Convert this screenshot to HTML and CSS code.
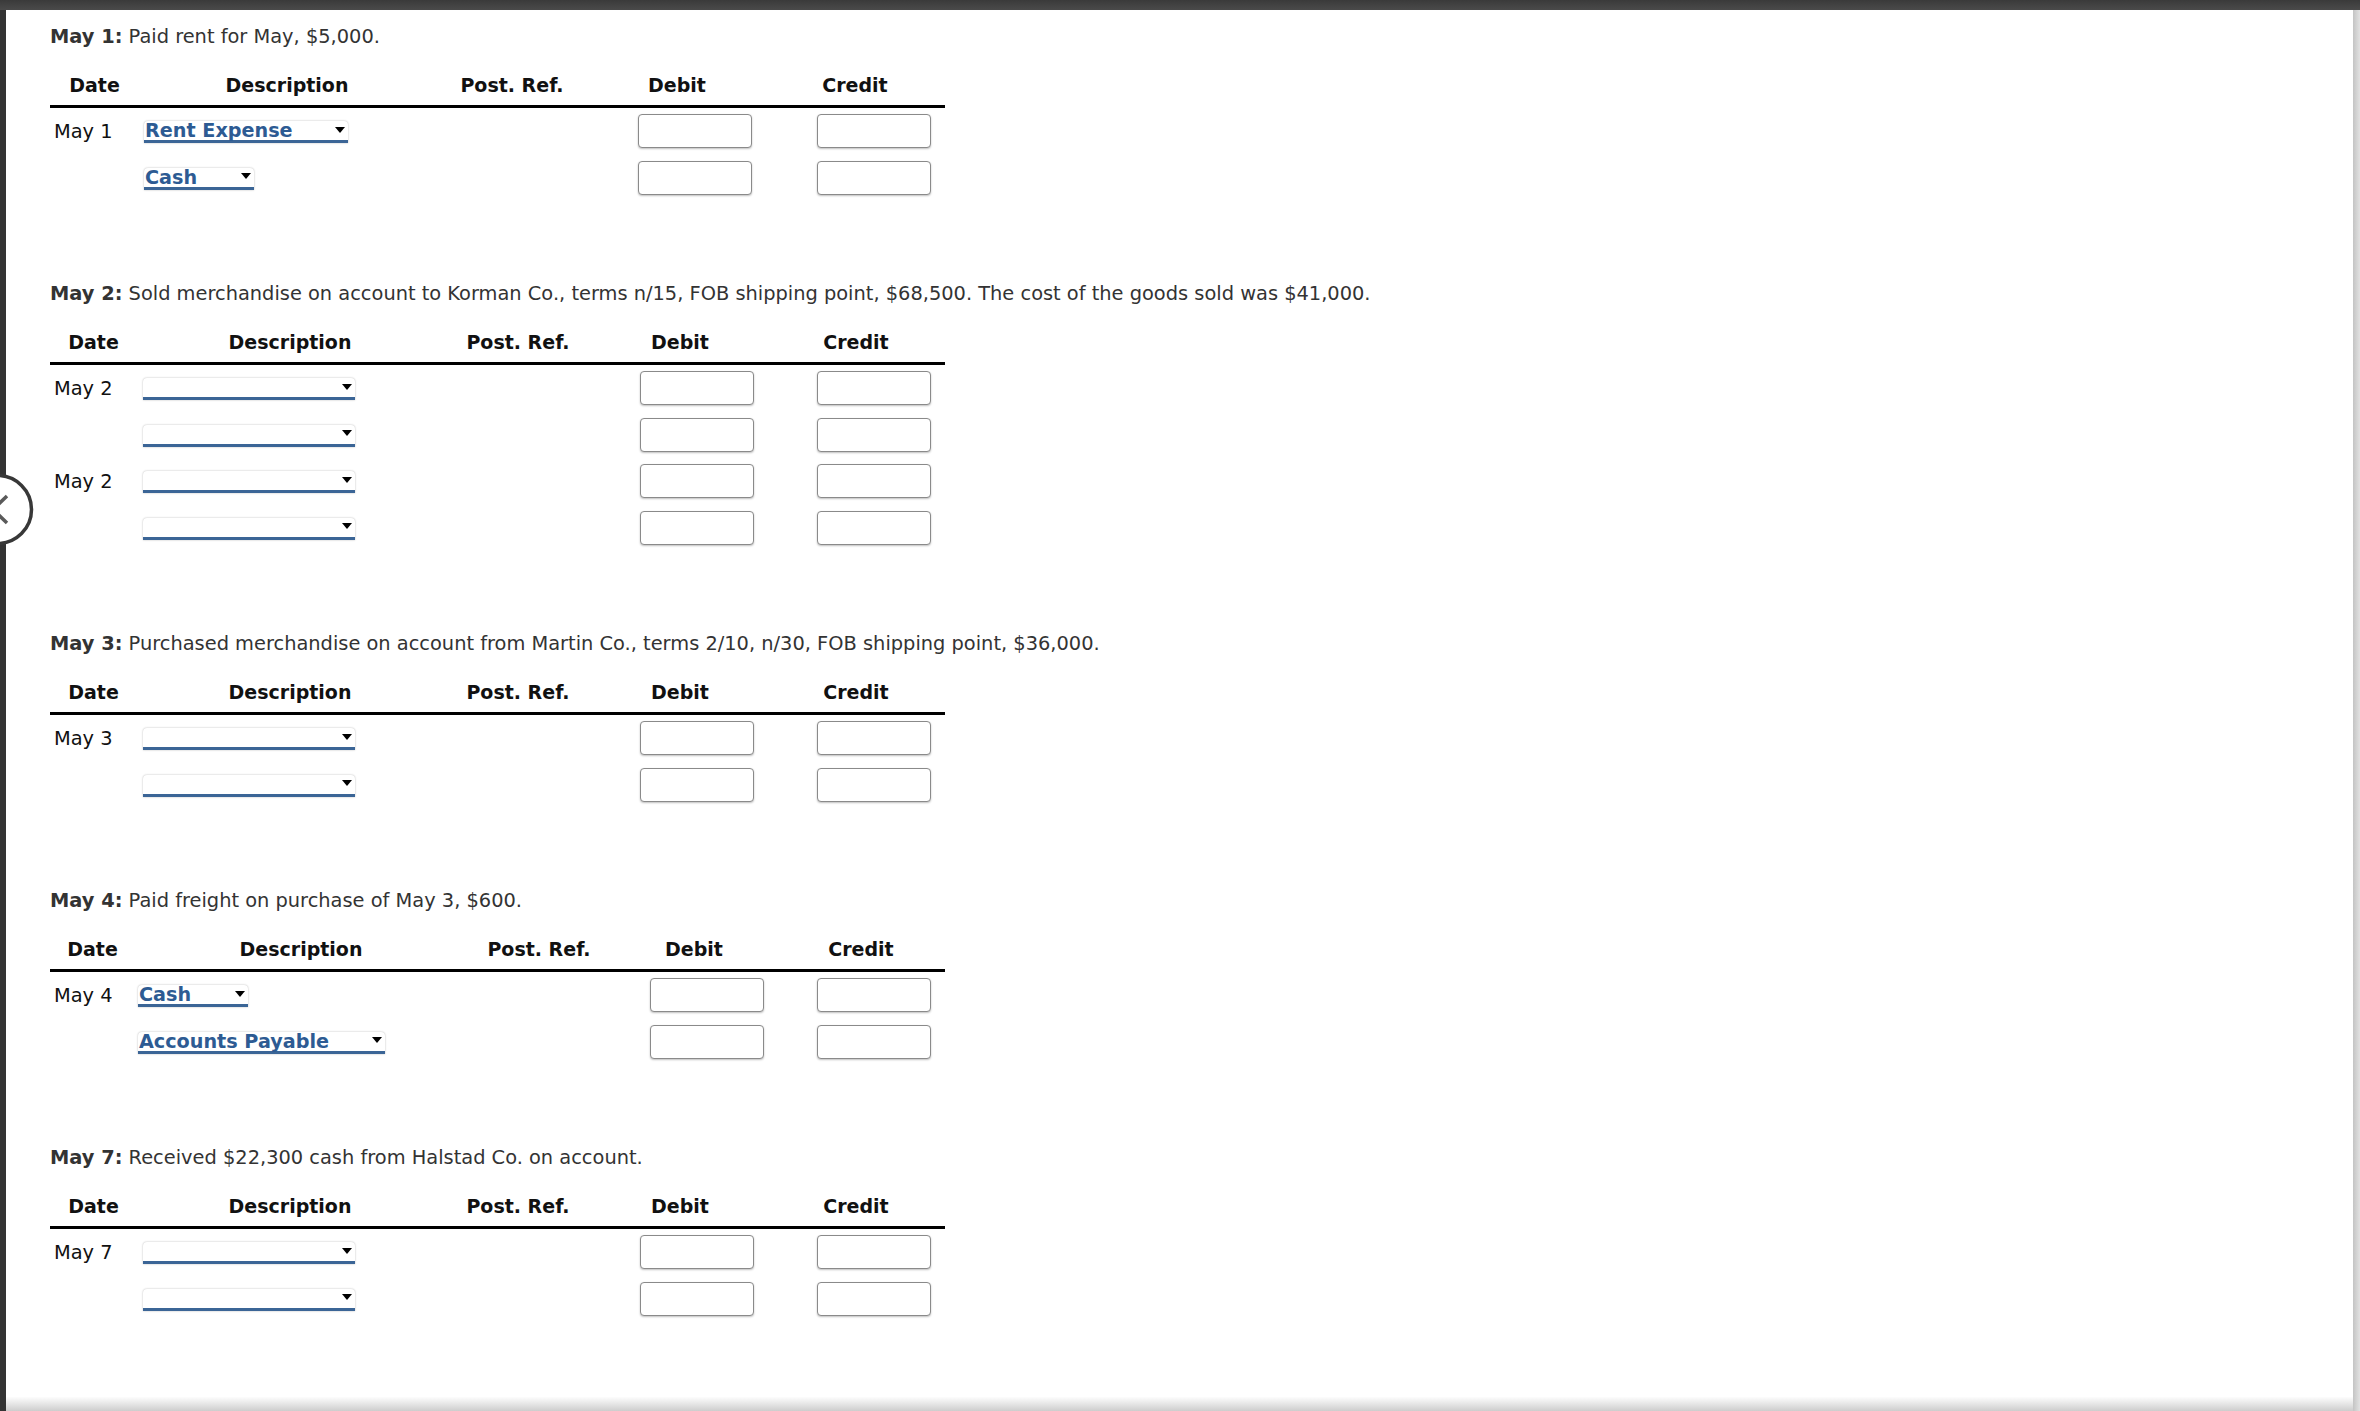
FILE: index.html
```html
<!DOCTYPE html>
<html lang="en">
<head>
<meta charset="utf-8">
<title>Journal entries</title>
<link rel="stylesheet" href="styles.css">
</head>
<body>
<div class="topbar"></div>
<div class="frame">
  <div class="leftbar"></div>
  <div class="column">
    <main class="page">

      <section class="entry">
        <p class="prompt"><b>May 1:</b> Paid rent for May, $5,000.</p>
        <div class="journal t1">
          <div class="th">Date</div><div class="th">Description</div><div class="th">Post. Ref.</div><div class="th">Debit</div><div class="th">Credit</div>
          <div class="date">May 1</div><div class="desc"><div class="select w-rent"><span>Rent Expense</span><i class="arrow"></i></div></div><div class="ref"></div><div class="amt debit"><div class="field"></div></div><div class="amt credit"><div class="field"></div></div>
          <div class="date"></div><div class="desc"><div class="select w-cash"><span>Cash</span><i class="arrow"></i></div></div><div class="ref"></div><div class="amt debit"><div class="field"></div></div><div class="amt credit"><div class="field"></div></div>
        </div>
      </section>

      <section class="entry">
        <p class="prompt"><b>May 2:</b> Sold merchandise on account to Korman Co., terms n/15, FOB shipping point, $68,500. The cost of the goods sold was $41,000.</p>
        <div class="journal t2">
          <div class="th">Date</div><div class="th">Description</div><div class="th">Post. Ref.</div><div class="th">Debit</div><div class="th">Credit</div>
          <div class="date">May 2</div><div class="desc"><div class="select w-empty"><span></span><i class="arrow"></i></div></div><div class="ref"></div><div class="amt debit"><div class="field"></div></div><div class="amt credit"><div class="field"></div></div>
          <div class="date"></div><div class="desc"><div class="select w-empty"><span></span><i class="arrow"></i></div></div><div class="ref"></div><div class="amt debit"><div class="field"></div></div><div class="amt credit"><div class="field"></div></div>
          <div class="date">May 2</div><div class="desc"><div class="select w-empty"><span></span><i class="arrow"></i></div></div><div class="ref"></div><div class="amt debit"><div class="field"></div></div><div class="amt credit"><div class="field"></div></div>
          <div class="date"></div><div class="desc"><div class="select w-empty"><span></span><i class="arrow"></i></div></div><div class="ref"></div><div class="amt debit"><div class="field"></div></div><div class="amt credit"><div class="field"></div></div>
        </div>
      </section>

      <section class="entry">
        <p class="prompt"><b>May 3:</b> Purchased merchandise on account from Martin Co., terms 2/10, n/30, FOB shipping point, $36,000.</p>
        <div class="journal t2">
          <div class="th">Date</div><div class="th">Description</div><div class="th">Post. Ref.</div><div class="th">Debit</div><div class="th">Credit</div>
          <div class="date">May 3</div><div class="desc"><div class="select w-empty"><span></span><i class="arrow"></i></div></div><div class="ref"></div><div class="amt debit"><div class="field"></div></div><div class="amt credit"><div class="field"></div></div>
          <div class="date"></div><div class="desc"><div class="select w-empty"><span></span><i class="arrow"></i></div></div><div class="ref"></div><div class="amt debit"><div class="field"></div></div><div class="amt credit"><div class="field"></div></div>
        </div>
      </section>

      <section class="entry">
        <p class="prompt"><b>May 4:</b> Paid freight on purchase of May 3, $600.</p>
        <div class="journal t4">
          <div class="th">Date</div><div class="th">Description</div><div class="th">Post. Ref.</div><div class="th">Debit</div><div class="th">Credit</div>
          <div class="date">May 4</div><div class="desc"><div class="select w-cash"><span>Cash</span><i class="arrow"></i></div></div><div class="ref"></div><div class="amt debit"><div class="field"></div></div><div class="amt credit"><div class="field"></div></div>
          <div class="date"></div><div class="desc"><div class="select w-ap"><span>Accounts Payable</span><i class="arrow"></i></div></div><div class="ref"></div><div class="amt debit"><div class="field"></div></div><div class="amt credit"><div class="field"></div></div>
        </div>
      </section>

      <section class="entry">
        <p class="prompt"><b>May 7:</b> Received $22,300 cash from Halstad Co. on account.</p>
        <div class="journal t2">
          <div class="th">Date</div><div class="th">Description</div><div class="th">Post. Ref.</div><div class="th">Debit</div><div class="th">Credit</div>
          <div class="date">May 7</div><div class="desc"><div class="select w-empty"><span></span><i class="arrow"></i></div></div><div class="ref"></div><div class="amt debit"><div class="field"></div></div><div class="amt credit"><div class="field"></div></div>
          <div class="date"></div><div class="desc"><div class="select w-empty"><span></span><i class="arrow"></i></div></div><div class="ref"></div><div class="amt debit"><div class="field"></div></div><div class="amt credit"><div class="field"></div></div>
        </div>
      </section>

    </main>
    <div class="bottom-shade"></div>
  </div>
  <div class="scrollstrip"></div>
</div>
<svg class="back-btn" width="44" height="80" viewBox="-6 0 44 80" aria-hidden="true">
  <circle cx="-8.5" cy="40.5" r="34" fill="#fff" stroke="#383838" stroke-width="3.5"/>
  <polyline points="1,27 -13,40.5 1,54" fill="none" stroke="#5a5a5a" stroke-width="3.5"/>
</svg>
</body>
</html>
```
FILE: styles.css
```css
html, body {
  margin: 0;
  padding: 0;
  height: 100%;
  overflow: hidden;
  background: #fff;
}
body {
  font-family: "DejaVu Sans", Verdana, sans-serif;
  font-size: 19px;
  color: #222;
  display: flex;
  flex-direction: column;
  position: relative;
}
.topbar {
  height: 10px;
  flex: none;
  background: linear-gradient(#3a3a3a, #4a4a4a);
}
.frame {
  flex: 1;
  display: flex;
  min-height: 0;
}
.leftbar {
  width: 6px;
  flex: none;
  background: #333;
}
.column {
  flex: 1;
  display: flex;
  flex-direction: column;
  min-width: 0;
}
.page {
  flex: 1;
  padding: 15px 0 0 44px;
  overflow: hidden;
}
.bottom-shade {
  height: 14px;
  flex: none;
  background: linear-gradient(#fdfdfd, #cdcdcd);
}
.scrollstrip {
  width: 7px;
  flex: none;
  background: linear-gradient(90deg, #c4c4c4, #e2e2e2);
}

.entry {
  margin-bottom: 81px;
}
.prompt {
  margin: 0 0 16px 0;
  font-size: 19.4px;
  line-height: 24px;
  color: #333;
  white-space: nowrap;
}
.prompt b {
  font-weight: bold;
}

.journal {
  display: grid;
  width: 895px;
  grid-template-rows: 43px;
  grid-auto-rows: 46.5px;
  color: #111;
}
.t1 { grid-template-columns: 89px 296px 154px 176px 180px; }
.t2 { grid-template-columns: 87px 306px 150px 174px 178px; }
.t4 { grid-template-columns: 85px 332px 144px 166px 168px; }

.th {
  box-sizing: border-box;
  border-bottom: 3px solid #000;
  font-weight: bold;
  text-align: center;
  line-height: 40px;
  color: #111;
}
.date {
  display: flex;
  align-items: center;
  padding-left: 4px;
  white-space: nowrap;
  font-size: 19.4px;
}
.desc {
  display: flex;
  align-items: center;
}
.t1 .desc { padding-left: 5px; }
.t2 .desc { padding-left: 6px; }
.t4 .desc { padding-left: 3px; }

.amt {
  display: flex;
  align-items: center;
  justify-content: flex-end;
}
.debit { padding-right: 13px; }
.credit { padding-right: 14px; }

.field {
  width: 114px;
  height: 34px;
  box-sizing: border-box;
  border: 1px solid #8a8a8a;
  border-radius: 4px;
  background: #fff;
  box-shadow: 0 1px 2px rgba(0, 0, 0, 0.25);
}

.select {
  display: flex;
  align-items: center;
  justify-content: space-between;
  box-sizing: border-box;
  height: 22px;
  margin-top: 2px;
  padding: 0 3px 0 1px;
  background: #fff;
  border-bottom: 3px solid #3b6596;
  border-radius: 4px 4px 0 0;
  box-shadow: 0 0 2px rgba(0, 0, 0, 0.3);
  color: #2d5b93;
  font-weight: bold;
  font-size: 19.2px;
  line-height: 19px;
  white-space: nowrap;
}
.w-rent { width: 204px; }
.w-cash { width: 110px; }
.w-empty { width: 212px; }
.w-ap { width: 247px; }

.arrow {
  width: 0;
  height: 0;
  border-left: 5px solid transparent;
  border-right: 5px solid transparent;
  border-top: 6px solid #000;
  margin-top: -2px;
}

.back-btn {
  position: absolute;
  left: 0;
  top: 469px;
}
```
